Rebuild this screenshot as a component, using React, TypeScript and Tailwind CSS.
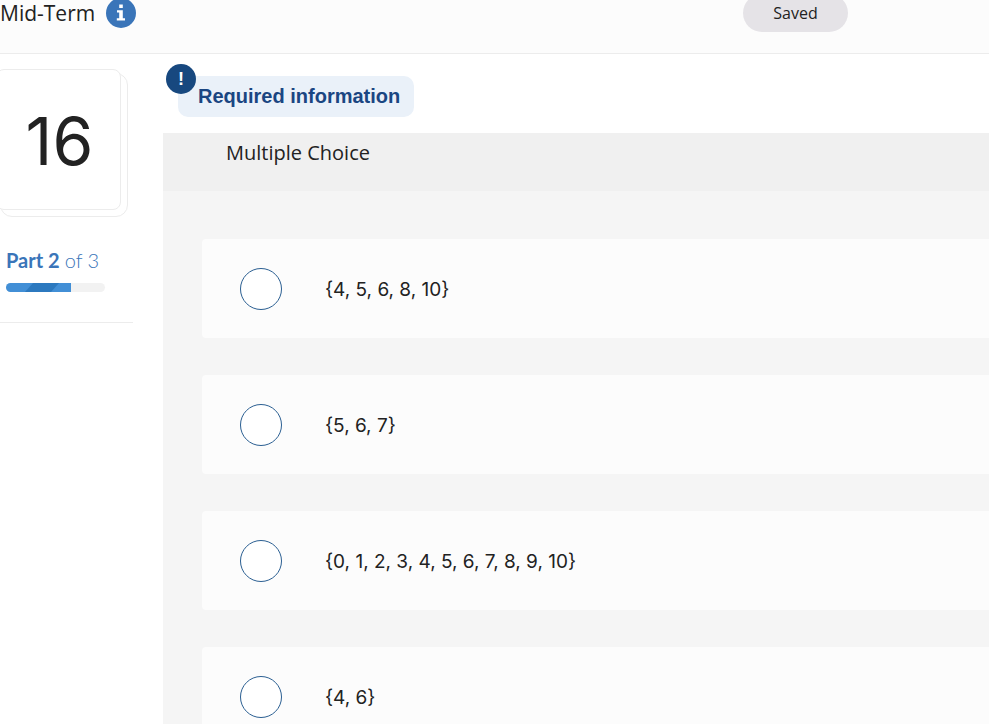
import { useState } from "react";

const CHOICES = [
  "{4, 5, 6, 8, 10}",
  "{5, 6, 7}",
  "{0, 1, 2, 3, 4, 5, 6, 7, 8, 9, 10}",
  "{4, 6}",
];

function TopBar() {
  return (
    <header className="flex h-[54px] items-start overflow-hidden border-b border-[#ececec] bg-[#fcfcfc]">
      <div className="-mt-1.5 flex h-[38px] flex-1 items-center">
        <h1 className="text-[21px] leading-6 font-['Open_Sans',sans-serif]">Mid-Term</h1>
        <button type="button" aria-label="Assignment info" className="ml-[11px] size-[30px]">
          <svg viewBox="0 0 30 30" className="size-full" aria-hidden="true">
            <circle cx="15" cy="15" r="15" fill="#3a75b9" />
            <path
              d="M13.2 6.5h3.6v3.4h-3.6zM11 12.2h5.8v8.1h2.2v2.2h-8.2v-2.2h2.4v-5.9H11z"
              fill="#fff"
            />
          </svg>
        </button>
      </div>
      <div
        role="status"
        className="-mt-1.5 mr-[141px] flex h-[38px] w-[105px] items-center justify-center rounded-full bg-[#e5e3e7] font-['Open_Sans',sans-serif] text-base"
      >
        Saved
      </div>
    </header>
  );
}

function QuestionRail() {
  return (
    <aside className="w-[133px] shrink-0">
      <div className="relative mt-[15px] h-[148px]">
        <div className="absolute top-1 right-[5px] bottom-0 left-0 rounded-[12px] border border-[#ececec] bg-white" />
        <div className="absolute top-0 right-3 -left-1 flex h-[141px] items-center justify-center rounded-[8px] border border-[#ececec] bg-white pt-1 pl-0.5 font-['Inter',sans-serif] text-[66px]">
          16
        </div>
      </div>
      <div className="border-b border-[#ececec] pt-[31px] pb-[30px] pl-1.5">
        <p id="part-label" className="text-xl leading-6 text-[#3a75b9]">
          <strong className="font-bold">Part 2</strong> <span className="font-light">of 3</span>
        </p>
        <div
          role="progressbar"
          aria-labelledby="part-label"
          aria-valuemin={0}
          aria-valuemax={3}
          aria-valuenow={2}
          className="mt-[11px] h-[9px] w-[99px] overflow-hidden rounded-full bg-[#f2f2f2]"
        >
          <svg viewBox="0 0 65 9" className="h-full w-[65px]" aria-hidden="true">
            <path d="M0 0h65v9H0z" fill="#428fd6" />
            <path d="M27 0h26l-8 9H19z" fill="#2c79bf" />
          </svg>
        </div>
      </div>
    </aside>
  );
}

function RequiredBadge() {
  return (
    <div className="relative mt-[22px] ml-[15px] w-fit rounded-[10px] bg-[#eaf1f9] py-1.5 pr-3.5 pl-5">
      <span
        aria-hidden="true"
        className="absolute -top-3 -left-3 flex size-[30px] items-center justify-center rounded-full bg-[#17487f] font-['Liberation_Sans',sans-serif] text-lg font-bold text-white"
      >
        !
      </span>
      <h2 className="font-['Liberation_Sans',sans-serif] text-xl leading-[29px] font-bold text-[#1a4682]">
        Required information
      </h2>
    </div>
  );
}

export default function App() {
  const [selected, setSelected] = useState<string | null>(null);

  return (
    <div className="h-screen overflow-hidden bg-white font-['Lato',sans-serif] text-[#222]">
      <TopBar />
      <div className="flex items-start">
        <QuestionRail />
        <main className="ml-[30px] min-w-0 flex-1">
          <RequiredBadge />
          <fieldset className="mt-4 min-w-0 bg-[#f5f5f5]">
            <legend className="float-left h-[58px] w-full bg-[#f0f0f0] pt-2 pl-[63px] text-xl leading-6 font-['Open_Sans',sans-serif]">
              Multiple Choice
            </legend>
            <div className="clear-both flex flex-col gap-[37px] pt-12 pb-12 pl-[39px]">
              {CHOICES.map((choice) => (
                <label
                  key={choice}
                  className="flex h-[99px] cursor-pointer items-center gap-[43px] rounded-l bg-[#fcfcfc] pl-[38px] font-['Inter',sans-serif] text-[19px] leading-6"
                >
                  <input
                    type="radio"
                    name="answer"
                    value={choice}
                    checked={selected === choice}
                    onChange={() => setSelected(choice)}
                    className="size-[42px] shrink-0 cursor-pointer appearance-none rounded-full border border-[#2b5f92] bg-white checked:border-[12px]"
                  />
                  <span className="pt-0.5">{choice}</span>
                </label>
              ))}
            </div>
          </fieldset>
        </main>
      </div>
    </div>
  );
}
